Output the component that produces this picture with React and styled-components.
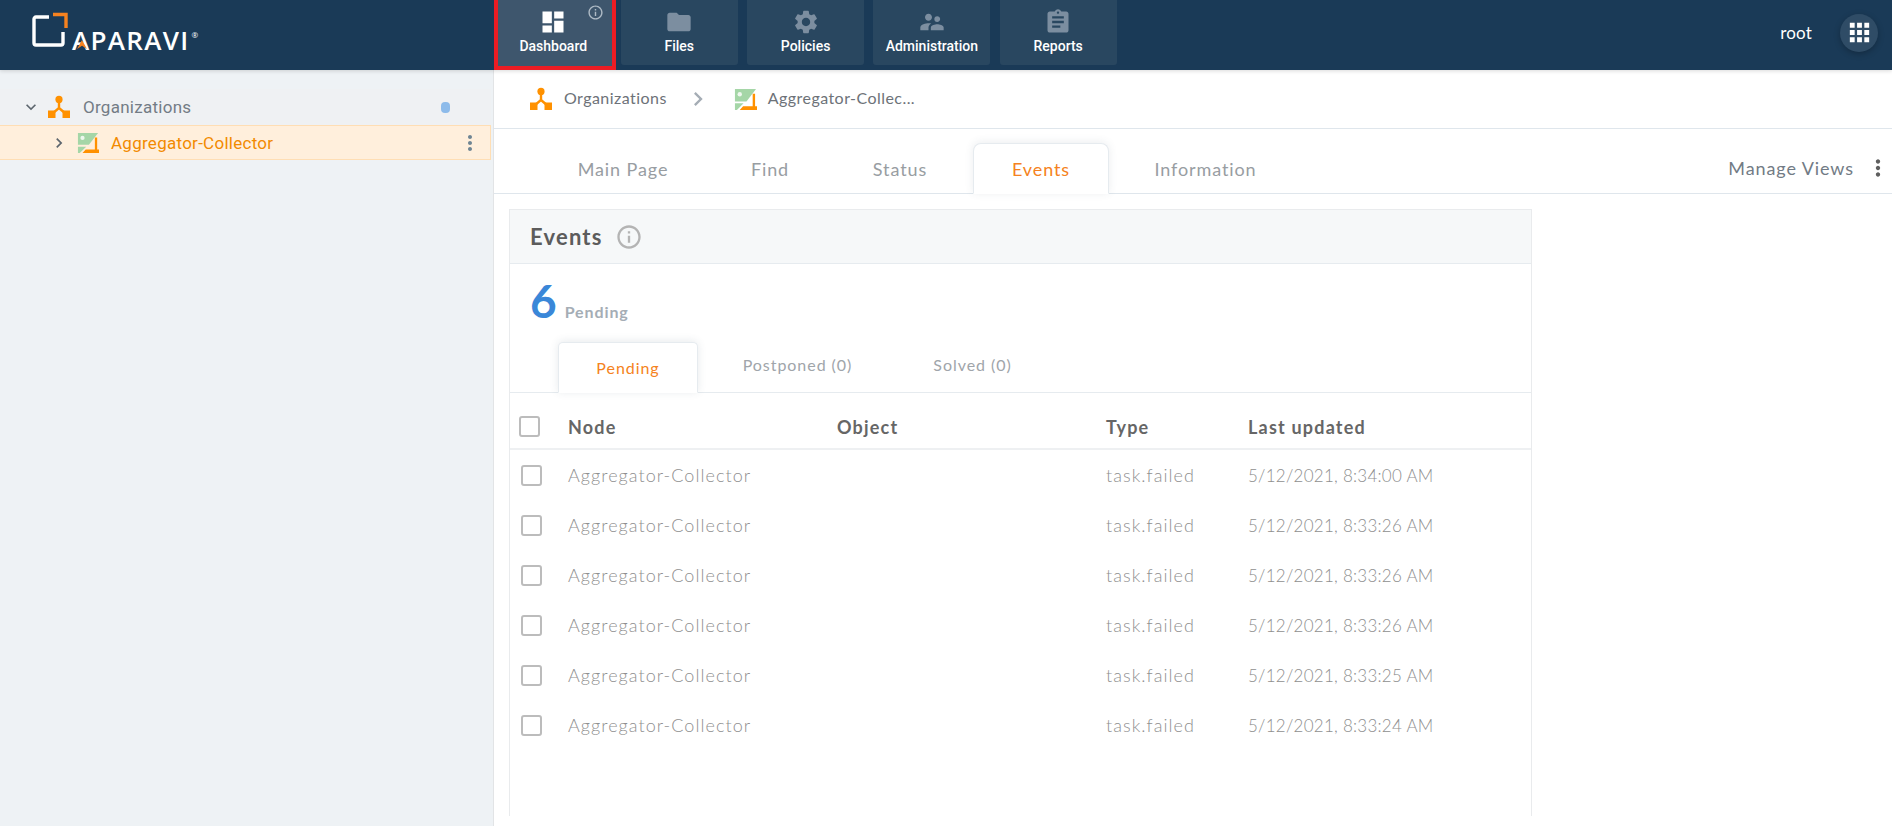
import React from 'react'
import styled, { createGlobalStyle } from 'styled-components'
import {
  MdDashboard, MdFolder, MdSettings, MdSupervisorAccount, MdAssignment, MdApps,
  MdInfoOutline, MdKeyboardArrowDown, MdKeyboardArrowRight, MdChevronRight, MdMoreVert,
} from 'react-icons/md'

const GlobalStyle = createGlobalStyle`
    html, body {
        margin: 0;
        padding: 0;
        height: 100%;
        overflow: hidden;
        background: #fff;
    }
    * {
        box-sizing: border-box;
    }
`

const CONTENT_FONT = `'Lato', 'Open Sans', sans-serif`
const UI_FONT = `'Roboto', 'Liberation Sans', sans-serif`

const Page = styled.div`
    display: flex;
    flex-direction: column;
    height: 826px;
    font-family: ${CONTENT_FONT};
`

const Header = styled.header`
    display: flex;
    align-items: flex-start;
    flex: 0 0 70px;
    background-color: #1a3a57;
    box-shadow: 0 1px 4px rgba(0, 0, 0, 0.15);
    z-index: 2;
`

const LogoBox = styled.div`
    display: flex;
    align-items: flex-start;
    width: 494.5px;
    height: 70px;
    padding: 12px 0 0 32px;
`

const LogoText = styled.span`
    font-family: 'Open Sans', sans-serif;
    font-size: 26px;
    font-weight: 600;
    line-height: 26px;
    color: #fff;
    letter-spacing: 1.3px;
    margin: 15px 0 0 2px;
`

const LogoFirstLetter = styled.span`
    position: relative;

    &::after {
        content: '';
        position: absolute;
        left: 5px;
        bottom: 9px;
        width: 10px;
        height: 9px;
        background-color: #f58220;
        clip-path: polygon(50% 0, 100% 100%, 50% 65%, 0 100%);
    }
`

const LogoMark = styled.sup`
    font-size: 8px;
    line-height: 8px;
    vertical-align: 12px;
    margin-left: 2px;
    letter-spacing: 0;
    font-weight: 400;
`

const Nav = styled.nav`
    display: flex;
    gap: 9.3px;
`

const NavTile = styled.div`
    position: relative;
    display: flex;
    flex-direction: column;
    align-items: center;
    width: ${props => (props.$active ? '113.5px' : '117px')};
    height: ${props => (props.$active ? '66px' : '65px')};
    margin-left: ${props => (props.$active ? '3.5px' : '0')};
    padding-top: 8px;
    padding-right: ${props => (props.$active ? '3px' : '0')};
    border-radius: ${props => (props.$active ? '0' : '0 0 3px 3px')};
    background-color: ${props => (props.$active ? '#3e566d' : '#294760')};
    outline: ${props => (props.$active ? '4px solid #ed1c24' : 'none')};
    font-family: ${UI_FONT};
    font-size: 14px;
    font-weight: 500;
    color: #fff;

    svg {
        color: ${props => (props.$active ? '#fff' : '#7c8ea0')};
    }
`

const NavLabel = styled.span`
    margin-top: 1px;
    line-height: 18px;
`

const NavInfo = styled.span`
    position: absolute;
    top: 4px;
    right: 8px;
    display: flex;

    svg {
        color: #aebac5;
    }
`

const UserArea = styled.div`
    display: flex;
    align-items: center;
    gap: 28px;
    height: 65px;
    margin-left: auto;
    padding-right: 14px;
`

const UserName = styled.span`
    font-size: 17px;
    letter-spacing: 0.2px;
    color: #fff;
`

const AppsButton = styled.div`
    display: flex;
    align-items: center;
    justify-content: center;
    width: 38px;
    height: 38px;
    border-radius: 50%;
    background-color: #2f4c66;
    box-shadow: 0 2px 6px rgba(0, 0, 0, 0.25);
    color: #fff;
`

const Body = styled.div`
    display: flex;
    flex: 1;
    min-height: 0;
`

const Sidebar = styled.aside`
    flex: 0 0 494px;
    padding-top: 19px;
    background-color: #eef2f5;
    border-right: 1px solid #e2e4e6;
    font-family: ${UI_FONT};
    font-size: 17px;
    letter-spacing: 0.27px;
`

const TreeRow = styled.div`
    display: flex;
    align-items: center;
    height: ${props => (props.$selected ? '35px' : '36px')};
    width: 491px;
    padding-left: ${props => props.$indent}px;
    padding-right: 8px;
    background-color: ${props => (props.$selected ? '#ffefdc' : '#eff1f3')};
    border: ${props => (props.$selected ? '1px solid #ffdeb4' : 'none')};
    border-left: none;
    color: ${props => (props.$selected ? '#f28a00' : '#737c85')};

    > svg:first-child {
        color: #5d666e;
        flex: 0 0 auto;
    }
`

const TreeLabel = styled.span`
    margin-left: ${props => props.$gap}px;
    flex: 1;
`

const TreeIcon = styled.span`
    display: flex;
    margin-left: ${props => props.$gap}px;
`

const RowMenu = styled.span`
    display: flex;
    color: #6f8593;
`

const StatusDot = styled.span`
    width: 9px;
    height: 11px;
    margin-right: 33px;
    border-radius: 4px;
    background-color: #8dbbea;
`

const Main = styled.main`
    display: flex;
    flex-direction: column;
    flex: 1;
    min-width: 0;
`

const Breadcrumbs = styled.div`
    display: flex;
    align-items: center;
    flex: 0 0 59px;
    padding-left: 35px;
    border-bottom: 1px solid #dfe6ec;
    font-size: 16px;
    letter-spacing: 0.45px;
    color: #6d7278;
`

const CrumbText = styled.span`
    margin: 0 0 3px 11px;
`

const CrumbArrow = styled.span`
    display: flex;
    margin: 0 22px 0 17px;
    color: #a5adb5;
`

const TabBar = styled.div`
    display: flex;
    align-items: flex-end;
    gap: 6px;
    flex: 0 0 65px;
    padding-left: 45px;
    border-bottom: 1px solid #dfe6ec;
`

const Tab = styled.div`
    display: flex;
    align-items: center;
    justify-content: center;
    width: ${props => props.$width}px;
    height: 51px;
    margin-bottom: -1px;
    font-size: 18px;
    letter-spacing: 0.9px;
    border-radius: 8px 8px 0 0;
    color: ${props => (props.$active ? '#f58220' : '#989da2')};
    background-color: ${props => (props.$active ? '#fff' : 'transparent')};
    border: ${props => (props.$active ? '1px solid #e6ebef' : 'none')};
    border-bottom: ${props => (props.$active ? '1px solid #fff' : 'none')};
    box-shadow: ${props => (props.$active ? '0 -1px 8px rgba(60, 80, 100, 0.1)' : 'none')};
`

const ManageViews = styled.div`
    display: flex;
    align-items: center;
    height: 50px;
    margin-left: auto;
    padding-right: 1px;
    font-size: 18px;
    letter-spacing: 0.9px;
    color: #727b85;

    svg {
        margin-left: 11px;
        color: #5f5f5f;
    }
`

const Content = styled.div`
    flex: 1;
    min-height: 0;
    padding: 15px 0 10px 15px;
`

const Card = styled.section`
    display: flex;
    flex-direction: column;
    width: 1023px;
    height: 100%;
    border: 1px solid #e9ebed;
    border-bottom: none;
`

const CardHeader = styled.div`
    display: flex;
    align-items: center;
    gap: 12px;
    flex: 0 0 54px;
    padding-left: 20px;
    background-color: #f6f8f9;
    border-bottom: 1px solid #e6ebef;
    font-size: 22px;
    font-weight: 700;
    letter-spacing: 1.2px;
    color: #5c5c5c;

    svg {
        color: #b4b4b4;
    }
`

const Summary = styled.div`
    display: flex;
    align-items: baseline;
    gap: 8px;
    flex: 0 0 74px;
    padding: 12px 0 0 20px;
`

const BigCount = styled.span`
    font-size: 46px;
    line-height: 50px;
    font-weight: 700;
    color: #3a87d8;
`

const SummaryLabel = styled.span`
    font-size: 16px;
    font-weight: 700;
    letter-spacing: 0.9px;
    color: #a5adb5;
`

const SubTabBar = styled.div`
    display: flex;
    align-items: flex-end;
    flex: 0 0 55px;
    padding-left: 48px;
    border-bottom: 1px solid #e6ebef;
`

const SubTab = styled.div`
    display: flex;
    align-items: center;
    justify-content: center;
    width: ${props => props.$width}px;
    height: ${props => (props.$active ? '51px' : '55px')};
    padding-bottom: ${props => (props.$active ? '0' : '3px')};
    margin-bottom: -1px;
    font-size: 16px;
    letter-spacing: 0.95px;
    border-radius: 5px 5px 0 0;
    color: ${props => (props.$active ? '#f58220' : '#a0a5aa')};
    background-color: ${props => (props.$active ? '#fff' : 'transparent')};
    border: ${props => (props.$active ? '1px solid #e6ebef' : 'none')};
    border-bottom: ${props => (props.$active ? '1px solid #fff' : 'none')};
    box-shadow: ${props => (props.$active ? '0 -1px 8px rgba(60, 80, 100, 0.12)' : 'none')};
`

const GridRow = styled.div`
    display: grid;
    grid-template-columns: 58px 269px 269px 142px 1fr;
    align-items: center;
    flex: 0 0 ${props => (props.$head ? '57px' : '50px')};
    padding-top: ${props => (props.$head ? '12px' : '0')};
    font-size: 18px;
    letter-spacing: ${props => (props.$head ? '1.2px' : '1.05px')};
    font-weight: ${props => (props.$head ? 700 : 300)};
    color: ${props => (props.$head ? '#666' : '#8f8f8f')};
    border-bottom: ${props => (props.$head ? '2px solid #eef0f2' : 'none')};
`

const TimeCell = styled.span`
    font-size: 17px;
    letter-spacing: 0.25px;
`

const Check = styled.span`
    display: block;
    width: 21px;
    height: 21px;
    margin-left: ${props => (props.$head ? '9px' : '11px')};
    border: 2px solid #bcbcbc;
    border-radius: 3px;
    background-color: #fff;
`

const OrgIcon = ({ size = 24 }) => (
  <svg width={size} height={size} viewBox="0 0 24 24">
    <g fill="#ff9100">
      <circle cx="12" cy="4.4" r="3.6" />
      <rect x="1" y="15.5" width="7.5" height="7.5" />
      <rect x="15.5" y="15.5" width="7.5" height="7.5" />
    </g>
    <path d="M12 6 V13 L5 19 M12 13 L19 19" fill="none" stroke="#ff9100" strokeWidth="2.4" />
  </svg>
)

const CollectorIcon = ({ size = 24 }) => (
  <svg width={size} height={size} viewBox="0 0 24 24">
    <path d="M1 1 H23 L13 14 H1 Z" fill="#a5d6a7" />
    <path d="M1 16 H10 L3 23 H1 Z" fill="#a5d6a7" />
    <circle cx="6" cy="6.5" r="2.3" fill="#eef7ee" />
    <path d="M19.5 6 H22 V19 H24 V23 H6 L9.5 19 H19.5 Z" fill="#ff9100" />
  </svg>
)

const AparaviLogo = () => (
  <svg width="38" height="36" viewBox="0 0 38 36">
    <path d="M17 5 H4 a2 2 0 0 0 -2 2 V31 a2 2 0 0 0 2 2 H29 a2 2 0 0 0 2 -2 V20" fill="none" stroke="#fff" strokeWidth="3.4" />
    <path d="M21 2.5 H34 V16" fill="none" stroke="#f58220" strokeWidth="3.4" />
  </svg>
)

const navItems = [
  { label: 'Dashboard', icon: MdDashboard, active: true },
  { label: 'Files', icon: MdFolder },
  { label: 'Policies', icon: MdSettings },
  { label: 'Administration', icon: MdSupervisorAccount },
  { label: 'Reports', icon: MdAssignment },
]

const tabs = [
  { label: 'Main Page', width: 168 },
  { label: 'Find', width: 114 },
  { label: 'Status', width: 134 },
  { label: 'Events', width: 136, active: true },
  { label: 'Information', width: 181 },
]

const rows = [
  '5/12/2021, 8:34:00 AM',
  '5/12/2021, 8:33:26 AM',
  '5/12/2021, 8:33:26 AM',
  '5/12/2021, 8:33:26 AM',
  '5/12/2021, 8:33:25 AM',
  '5/12/2021, 8:33:24 AM',
]

export default function App() {
  return (
    <Page>
      <GlobalStyle />
      <Header>
        <LogoBox>
          <AparaviLogo />
          <LogoText><LogoFirstLetter>A</LogoFirstLetter>PARAVI<LogoMark>®</LogoMark></LogoText>
        </LogoBox>
        <Nav>
          {navItems.map(({ label, icon: Icon, active }) => (
            <NavTile key={label} $active={active}>
              <Icon size={28} />
              <NavLabel>{label}</NavLabel>
              {active && <NavInfo><MdInfoOutline size={17} /></NavInfo>}
            </NavTile>
          ))}
        </Nav>
        <UserArea>
          <UserName>root</UserName>
          <AppsButton><MdApps size={29} /></AppsButton>
        </UserArea>
      </Header>
      <Body>
        <Sidebar>
          <TreeRow $indent={21}>
            <MdKeyboardArrowDown size={20} />
            <TreeIcon $gap={6}><OrgIcon size={24} /></TreeIcon>
            <TreeLabel $gap={12}>Organizations</TreeLabel>
            <StatusDot />
          </TreeRow>
          <TreeRow $selected $indent={49}>
            <MdKeyboardArrowRight size={20} />
            <TreeIcon $gap={8}><CollectorIcon size={22} /></TreeIcon>
            <TreeLabel $gap={12}>Aggregator-Collector</TreeLabel>
            <RowMenu><MdMoreVert size={24} /></RowMenu>
          </TreeRow>
        </Sidebar>
        <Main>
          <Breadcrumbs>
            <OrgIcon size={24} />
            <CrumbText>Organizations</CrumbText>
            <CrumbArrow><MdChevronRight size={28} /></CrumbArrow>
            <CollectorIcon size={23} />
            <CrumbText>Aggregator-Collec...</CrumbText>
          </Breadcrumbs>
          <TabBar>
            {tabs.map(tab => (
              <Tab key={tab.label} $width={tab.width} $active={tab.active}>{tab.label}</Tab>
            ))}
            <ManageViews>Manage Views<MdMoreVert size={26} /></ManageViews>
          </TabBar>
          <Content>
            <Card>
              <CardHeader>Events<MdInfoOutline size={28} /></CardHeader>
              <Summary>
                <BigCount>6</BigCount>
                <SummaryLabel>Pending</SummaryLabel>
              </Summary>
              <SubTabBar>
                <SubTab $width={140} $active>Pending</SubTab>
                <SubTab $width={199}>Postponed (0)</SubTab>
                <SubTab $width={151}>Solved (0)</SubTab>
              </SubTabBar>
              <GridRow $head>
                <Check $head />
                <span>Node</span>
                <span>Object</span>
                <span>Type</span>
                <span>Last updated</span>
              </GridRow>
              {rows.map((time, i) => (
                <GridRow key={i}>
                  <Check />
                  <span>Aggregator-Collector</span>
                  <span />
                  <span>task.failed</span>
                  <TimeCell>{time}</TimeCell>
                </GridRow>
              ))}
            </Card>
          </Content>
        </Main>
      </Body>
    </Page>
  )
}
